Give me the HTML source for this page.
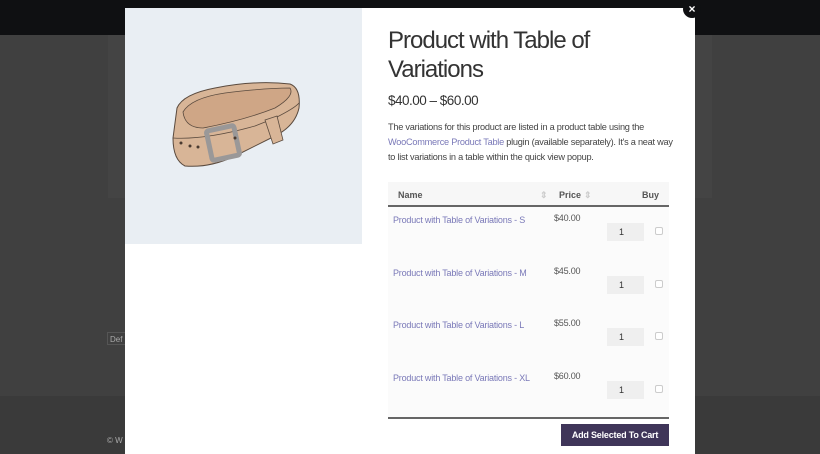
<!DOCTYPE html>
<html><head><style>
*{margin:0;padding:0;box-sizing:border-box}
body{width:820px;height:454px;overflow:hidden;background:#404040;font-family:"Liberation Sans",sans-serif;position:relative}
.hdr{position:absolute;left:0;top:0;width:820px;height:35px;background:#0f1012}
.panel{position:absolute;left:108px;top:35px;width:604px;height:163px;background:#444}
.foot{position:absolute;left:0;top:396px;width:820px;height:58px;background:#3a3a3a}
.modal{position:absolute;left:125px;top:8px;width:570px;height:446px;background:#fff}
.img{position:absolute;left:0;top:0;width:237px;height:236px;background:#e9eef3}
.close{position:absolute;left:683px;top:0;width:18px;height:18px;border-radius:50%;background:#0f1012;color:#fff;font-size:12px;line-height:18px;text-align:center;font-weight:bold}
h1{position:absolute;left:263px;top:18px;font-weight:normal;font-size:24px;line-height:29px;color:#333;letter-spacing:-1px}
.price{position:absolute;left:263px;top:85px;font-size:13.5px;color:#333;letter-spacing:-0.5px}
.desc{position:absolute;left:263px;top:112px;width:290px;font-size:9.2px;line-height:15px;color:#444;letter-spacing:-0.25px}
.desc a{color:#7a79b8}
.tbl{position:absolute;left:263px;top:174px;width:281px}
.th{height:25px;background:#f7f7f7;border-bottom:2px solid #666;font-size:9px;font-weight:bold;color:#555;position:relative}
.th span{position:absolute;top:8px}
.row{height:52.5px;background:#fbfbfb;position:relative;font-size:9px;letter-spacing:-0.2px}
.row .n{position:absolute;left:5px;top:8px;color:#7a79b8}
.row .p{position:absolute;left:166px;top:6px;color:#555}
.row .q{position:absolute;left:219px;top:16px;width:37px;height:18px;background:#efefef;font-size:9px;line-height:18px;padding-left:12px;color:#333}
.row .c{position:absolute;left:267px;top:20px;width:8px;height:8px;border:1px solid #ccc;border-radius:2px;background:#fff}
.bline{height:2px;background:#666}
.btn{position:absolute;left:436px;top:416px;width:108px;height:22px;background:#3f3559;color:#fff;font-size:9px;font-weight:bold;text-align:center;line-height:22px;letter-spacing:-0.2px}
</style></head><body>
<div class="hdr"></div><div class="panel"></div><div class="foot"></div>
<div style="position:absolute;left:107px;top:332px;width:20px;height:13px;border:1px solid #555;font-size:8px;color:#aaa;padding:2px">Def</div>
<div style="position:absolute;left:107px;top:436px;font-size:8px;color:#aaa">© W</div>
<div class="modal">
<div class="img">
<svg width="237" height="236" viewBox="0 0 237 236">
<path d="M52 100 Q58 86 90 80 Q130 72 165 76 Q176 80 174 100 Q170 118 150 128 L110 148 Q85 160 60 158 Q48 152 48 130 Z" fill="#d8b597" stroke="#5a4a3e" stroke-width="1"/>
<path d="M58 104 Q66 90 100 85 Q140 80 165 80 Q170 88 150 100 Q120 112 78 120 Q60 120 58 104 Z" fill="#cfa686" stroke="#5a4a3e" stroke-width="0.8"/>
<path d="M48 130 Q80 132 130 118 L150 110 Q170 100 174 95" fill="none" stroke="#5a4a3e" stroke-width="0.8"/>
<rect x="84" y="120" width="28" height="30" rx="2" fill="none" stroke="#9a9898" stroke-width="5" transform="rotate(-12 98 135)"/>
<path d="M140 112 L152 108 L158 132 L148 136 Z" fill="#d8b597" stroke="#5a4a3e" stroke-width="0.8"/>
<circle cx="56" cy="135" r="1.5" fill="#4a3a30"/><circle cx="65" cy="138" r="1.5" fill="#4a3a30"/><circle cx="73" cy="139" r="1.5" fill="#4a3a30"/><circle cx="110" cy="130" r="1.5" fill="#4a3a30"/>
</svg>
</div>
<h1>Product with Table of<br>Variations</h1>
<div class="price">$40.00 – $60.00</div>
<div class="desc">The variations for this product are listed in a product table using the <a>WooCommerce Product Table</a> plugin (available separately). It's a neat way to list variations in a table within the quick view popup.</div>
<div class="tbl">
<div class="th"><span style="left:10px">Name</span><span style="left:152px;color:#ccc">⇕</span><span style="left:171px">Price</span><span style="left:196px;color:#ccc">⇕</span><span style="left:254px">Buy</span></div>
<div class="row"><span class="n">Product with Table of Variations - S</span><span class="p">$40.00</span><div class="q">1</div><div class="c"></div></div>
<div class="row"><span class="n">Product with Table of Variations - M</span><span class="p">$45.00</span><div class="q">1</div><div class="c"></div></div>
<div class="row"><span class="n">Product with Table of Variations - L</span><span class="p">$55.00</span><div class="q">1</div><div class="c"></div></div>
<div class="row"><span class="n">Product with Table of Variations - XL</span><span class="p">$60.00</span><div class="q">1</div><div class="c"></div></div>
<div class="bline"></div>
</div>
<div class="btn">Add Selected To Cart</div>
</div>
<div class="close">×</div>
</body></html>
